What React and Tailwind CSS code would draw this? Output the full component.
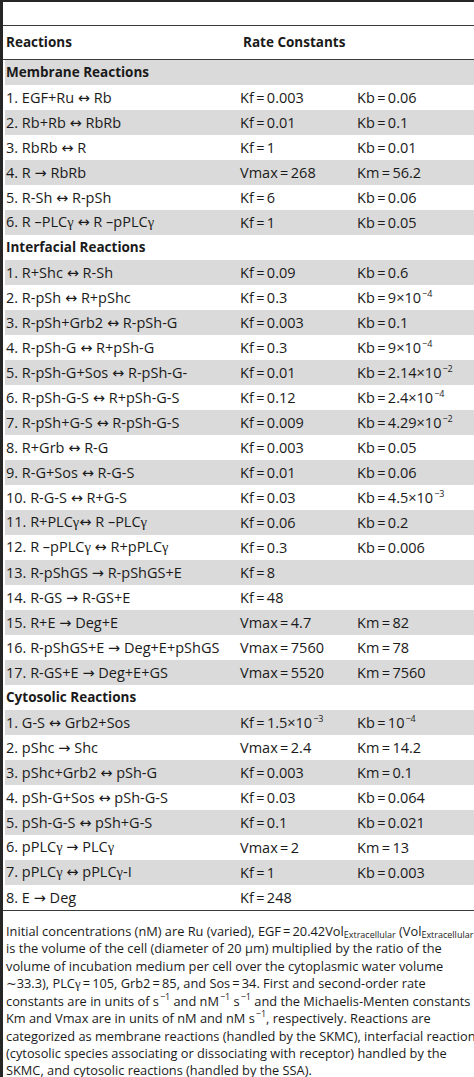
const X = '\u00d7';
const EQ = '\u2009=\u2009';

function Sup({ children }) {
  return <sup className="text-[9px] leading-none -top-[6px] ml-[1px]">{children}</sup>;
}

function Exp({ base, m, e }) {
  return (
    <span>
      {base}{EQ}{m !== undefined && <>{m}{X}</>}10<Sup>{e}</Sup>
    </span>
  );
}

// gamma is set in a serif face, as in the printed table
function G() {
  return <span style={{ fontFamily: '"Liberation Serif", serif' }}>{'\u03b3'}</span>;
}

const sections = [
  {
    title: 'Membrane Reactions',
    rows: [
      ['1. EGF+Ru \u2194 Rb', 'Kf = 0.003', 'Kb = 0.06'],
      ['2. Rb+Rb \u2194 RbRb', 'Kf = 0.01', 'Kb = 0.1'],
      ['3. RbRb \u2194 R', 'Kf = 1', 'Kb = 0.01'],
      ['4. R \u2192 RbRb', 'Vmax = 268', 'Km = 56.2'],
      ['5. R-Sh \u2194 R-pSh', 'Kf = 6', 'Kb = 0.06'],
      ['6. R \u2013PLC\u03b3 \u2194 R \u2013pPLC\u03b3', 'Kf = 1', 'Kb = 0.05'],
    ],
  },
  {
    title: 'Interfacial Reactions',
    rows: [
      ['1. R+Shc \u2194 R-Sh', 'Kf = 0.09', 'Kb = 0.6'],
      ['2. R-pSh \u2194 R+pShc', 'Kf = 0.3', <Exp base="Kb" m="9" e={'\u22124'} />],
      ['3. R-pSh+Grb2 \u2194 R-pSh-G', 'Kf = 0.003', 'Kb = 0.1'],
      ['4. R-pSh-G \u2194 R+pSh-G', 'Kf = 0.3', <Exp base="Kb" m="9" e={'\u22124'} />],
      ['5. R-pSh-G+Sos \u2194 R-pSh-G-', 'Kf = 0.01', <Exp base="Kb" m="2.14" e={'\u22122'} />],
      ['6. R-pSh-G-S \u2194 R+pSh-G-S', 'Kf = 0.12', <Exp base="Kb" m="2.4" e={'\u22124'} />],
      ['7. R-pSh+G-S \u2194 R-pSh-G-S', 'Kf = 0.009', <Exp base="Kb" m="4.29" e={'\u22122'} />],
      ['8. R+Grb \u2194 R-G', 'Kf = 0.003', 'Kb = 0.05'],
      ['9. R-G+Sos \u2194 R-G-S', 'Kf = 0.01', 'Kb = 0.06'],
      ['10. R-G-S \u2194 R+G-S', 'Kf = 0.03', <Exp base="Kb" m="4.5" e={'\u22123'} />],
      ['11. R+PLC\u03b3\u2194 R \u2013PLC\u03b3', 'Kf = 0.06', 'Kb = 0.2'],
      ['12. R \u2013pPLC\u03b3 \u2194 R+pPLC\u03b3', 'Kf = 0.3', 'Kb = 0.006'],
      ['13. R-pShGS \u2192 R-pShGS+E', 'Kf = 8', ''],
      ['14. R-GS \u2192 R-GS+E', 'Kf = 48', ''],
      ['15. R+E \u2192 Deg+E', 'Vmax = 4.7', 'Km = 82'],
      ['16. R-pShGS+E \u2192 Deg+E+pShGS', 'Vmax = 7560', 'Km = 78'],
      ['17. R-GS+E \u2192 Deg+E+GS', 'Vmax = 5520', 'Km = 7560'],
    ],
  },
  {
    title: 'Cytosolic Reactions',
    rows: [
      ['1. G-S \u2194 Grb2+Sos', <Exp base="Kf" m="1.5" e={'\u22123'} />, <Exp base="Kb" e={'\u22124'} />],
      ['2. pShc \u2192 Shc', 'Vmax = 2.4', 'Km = 14.2'],
      ['3. pShc+Grb2 \u2194 pSh-G', 'Kf = 0.003', 'Km = 0.1'],
      ['4. pSh-G+Sos \u2194 pSh-G-S', 'Kf = 0.03', 'Kb = 0.064'],
      ['5. pSh-G-S \u2194 pSh+G-S', 'Kf = 0.1', 'Kb = 0.021'],
      ['6. pPLC\u03b3 \u2192 PLC\u03b3', 'Vmax = 2', 'Km = 13'],
      ['7. pPLC\u03b3 \u2194 pPLC\u03b3-I', 'Kf = 1', 'Kb = 0.003'],
      ['8. E \u2192 Deg', 'Kf = 248', ''],
    ],
  },
];

function fmt(v) {
  if (typeof v !== 'string') return v;
  const parts = v.replace(' = ', EQ).split('\u03b3');
  return parts.map((p, i) => (
    <span key={i}>{p}{i < parts.length - 1 && <G />}</span>
  ));
}

export default function App() {
  const lines = [];
  sections.forEach(s => {
    lines.push({ head: s.title });
    s.rows.forEach(r => lines.push({ cells: r }));
  });

  return (
    <div className="w-[474px] h-[1077px] overflow-hidden bg-white text-[#1a1a1a] border-l-[3px] border-[#262626]"
      style={{ fontFamily: '"Open Sans", "DejaVu Sans", sans-serif' }}>
      <div className="h-[2px] bg-[#262626]" />
      <div className="h-[23px]" />
      <div className="border-t border-[#3a3a3a]" />
      <div className="h-[34px] flex items-center pl-[3px] text-[13.5px] font-bold border-b-[1.5px] border-[#3a3a3a]">
        <div className="w-[237px]">Reactions</div>
        <div>Rate Constants</div>
      </div>
      <div className="pl-[2px]">
        {lines.map((l, i) => (
          <div key={i}
            className={`h-[25px] flex items-center pl-[1px] text-[14.5px] whitespace-nowrap ${i % 2 === 0 ? 'bg-[#dadada]' : 'bg-white'}`}>
            {l.head ? (
              <div className="font-bold text-[13.5px]">{l.head}</div>
            ) : (
              <>
                <div className="w-[234px]">{fmt(l.cells[0])}</div>
                <div className="w-[117px]">{fmt(l.cells[1])}</div>
                <div>{fmt(l.cells[2])}</div>
              </>
            )}
          </div>
        ))}
      </div>
      <div className="border-t border-[#3a3a3a]" />
      <div className="pt-[12px] pl-[3px] text-[12.8px] leading-[17.25px] whitespace-nowrap">
        <div>Initial concentrations (nM) are Ru (varied), EGF{EQ}20.42Vol<sub className="text-[9px] leading-none">Extracellular</sub> (Vol<sub className="text-[9px] leading-none">Extracellular</sub></div>
        <div>is the volume of the cell (diameter of 20 μm) multiplied by the ratio of the</div>
        <div>volume of incubation medium per cell over the cytoplasmic water volume</div>
        <div>{'\u223c'}33.3), PLC<G />{EQ}105, Grb2{EQ}85, and Sos{EQ}34. First and second-order rate</div>
        <div>constants are in units of s<Sup>{'\u22121'}</Sup> and nM<Sup>{'\u22121'}</Sup> s<Sup>{'\u22121'}</Sup> and the Michaelis-Menten constants</div>
        <div>Km and Vmax are in units of nM and nM s<Sup>{'\u22121'}</Sup>, respectively. Reactions are</div>
        <div>categorized as membrane reactions (handled by the SKMC), interfacial reactions</div>
        <div>(cytosolic species associating or dissociating with receptor) handled by the</div>
        <div>SKMC, and cytosolic reactions (handled by the SSA).</div>
      </div>
    </div>
  );
}
